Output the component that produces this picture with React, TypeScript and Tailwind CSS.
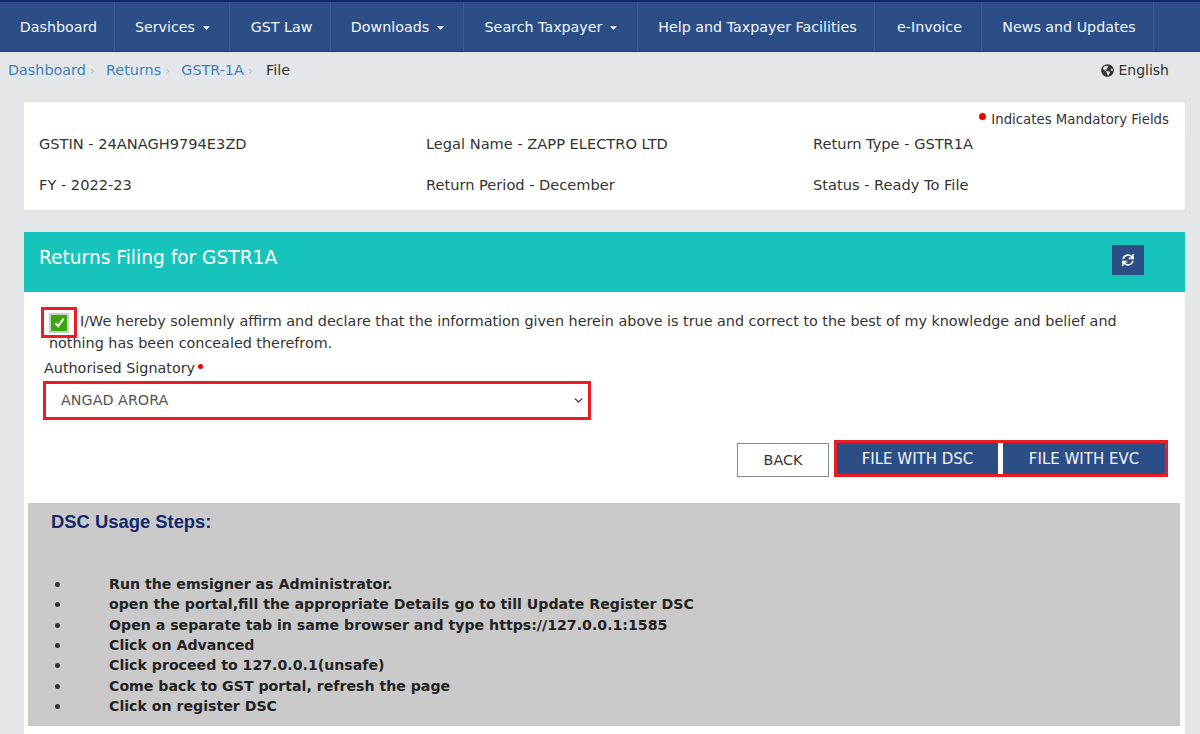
import React from "react";
import { FaCaretDown, FaGlobeAmericas, FaSync } from "react-icons/fa";
import { ChevronDown } from "lucide-react";

const navItems = [
  { label: "Dashboard", w: "w-[115px]" },
  { label: "Services", w: "w-[115px]", caret: true },
  { label: "GST Law", w: "w-[101px]" },
  { label: "Downloads", w: "w-[133px]", caret: true },
  { label: "Search Taxpayer", w: "w-[174px]", caret: true },
  { label: "Help and Taxpayer Facilities", w: "w-[237px]" },
  { label: "e-Invoice", w: "w-[107px]" },
  { label: "News and Updates", w: "w-[172px]" },
];

const steps = [
  "Run the emsigner as Administrator.",
  "open the portal,fill the appropriate Details go to till Update Register DSC",
  "Open a separate tab in same browser and type https://127.0.0.1:1585",
  "Click on Advanced",
  "Click proceed to 127.0.0.1(unsafe)",
  "Come back to GST portal, refresh the page",
  "Click on register DSC",
];

function Crumb({ text, className }: { text: string; className: string }) {
  return (
    <>
      <span className="text-[#3f7fb8]">{text}</span>
      <span className={`text-[#b9bfc6] text-[13px] ${className}`}>›</span>
    </>
  );
}

export default function App() {
  return (
    <div className="h-[734px] overflow-hidden bg-[#e4e7ea] font-['DejaVu_Sans',sans-serif] text-[14.35px] text-[#333333]">
      <nav className="flex h-[52px] border-t-2 border-b border-t-[#13286b] border-b-[#1c3d78] bg-[#2c4e86] text-[14.25px] text-[#f2f5f9]">
        {navItems.map((item) => (
          <div
            key={item.label}
            className={`${item.w} flex shrink-0 items-center justify-center border-r border-[#3a5b92] pt-[2px] pl-[3px] whitespace-nowrap`}
          >
            {item.label}
            {item.caret && <FaCaretDown className="ml-[6px] text-[11px]" />}
          </div>
        ))}
      </nav>

      <div className="flex h-[50px] items-center justify-between pr-[31px] pb-[12px] pl-2">
        <div className="flex items-center">
          <Crumb text="Dashboard" className="mr-[11px] ml-[4px]" />
          <Crumb text="Returns" className="mr-[11px] ml-[4px]" />
          <Crumb text="GSTR-1A" className="mr-[13px] ml-[4px]" />
          <span>File</span>
        </div>
        <div className="mt-[-2px] flex items-center gap-[4px] text-[14px]">
          <FaGlobeAmericas className="text-[13px]" />
          English
        </div>
      </div>

      <main className="mr-[15px] ml-6">
        <section className="h-[108px] bg-white px-[15px]">
          <div className="flex h-[30px] items-end justify-end pb-[2px] pr-[1px] text-[13.3px]">
            <span className="mr-[5px] mb-[10px] h-[7px] w-[7px] rounded-full bg-[#f00000]" />
            Indicates Mandatory Fields
          </div>
          <div className="mt-[2px] grid grid-cols-[387px_387px_1fr] gap-y-[21px] text-[14.6px] leading-5">
            <span>GSTIN - 24ANAGH9794E3ZD</span>
            <span>Legal Name - ZAPP ELECTRO LTD</span>
            <span>Return Type - GSTR1A</span>
            <span>FY - 2022-23</span>
            <span>Return Period - December</span>
            <span>Status - Ready To File</span>
          </div>
        </section>

        <section className="mt-[22px] h-[502px] bg-white">
          <div className="flex h-[60px] items-center justify-between bg-[#17c4bb] pr-[41px] pb-[8px] pl-[15px] text-[18.6px] text-white">
            Returns Filing for GSTR1A
            <button className="mt-[4px] flex h-[30px] w-[32px] items-center justify-center bg-[#2c4e86]">
              <FaSync className="text-[12px]" />
            </button>
          </div>

          <div className="pt-[18px] pr-[17px] pl-[20px]">
            <p className="w-[1100px] leading-[22px]">
              <span className="relative inline-block h-[22px] w-[36px] align-top">
                <span className="absolute top-[-3px] -left-[3px] flex h-[31px] w-[36px] items-center justify-center border-[3px] border-[#ed1c24]">
                  <span className="flex h-[20px] w-[20px] items-center justify-center border-2 border-[#c9cfca] bg-[#3aa60c] text-white">
                    <svg viewBox="0 0 12 12" className="h-[13px] w-[13px]" fill="none" stroke="currentColor" strokeWidth="1.8">
                      <path d="M2.2 6.5 4.8 9.4 9.8 2.4" />
                    </svg>
                  </span>
                </span>
              </span>
              I/We hereby solemnly affirm and declare that the information given herein above is true and correct to the best of my knowledge and belief and{" "}
              <span className="pl-[5px]">nothing has been concealed therefrom.</span>
            </p>

            <label className="mt-[5px] flex h-[20px] items-center">
              Authorised Signatory
              <span className="mb-[6px] ml-[3px] h-[5px] w-[5px] rounded-full bg-[#f00000]" />
            </label>
            <div className="mt-[2px] ml-[-1px] flex h-[39px] w-[548px] items-center justify-between border-[3px] border-[#ed1c24] pr-[3px] pl-[15px] text-[#555555]">
              ANGAD ARORA
              <ChevronDown className="h-[13px] w-[13px] text-[#333333]" strokeWidth={2.5} />
            </div>

            <div className="mt-[20px] flex items-start justify-end">
              <button className="mt-[3px] mr-[5px] h-[34px] w-[92px] border border-[#7c8ba0] bg-white pt-[1px]">BACK</button>
              <div className="flex h-[37px] w-[334px] border-[3px] border-[#ed1c24] bg-white text-[15px] text-[#f2f5f9]">
                <button className="h-[31px] w-[161px] bg-[#2c4e86] pt-[2px]">FILE WITH DSC</button>
                <button className="ml-[5px] h-[31px] flex-1 bg-[#2c4e86] pt-[2px]">FILE WITH EVC</button>
              </div>
            </div>
          </div>

          <div className="mt-[26px] mr-[5px] ml-1 h-[223px] bg-[#cacaca] pt-[9px] pl-[23px] text-[14.15px] font-bold text-[#222222]">
            <h3 className="font-['Liberation_Sans',sans-serif] text-[18.4px] leading-5 text-[#12286b]">DSC Usage Steps:</h3>
            <ul className="mt-[42.5px]">
              {steps.map((step) => (
                <li key={step} className="flex h-[20.33px] items-center">
                  <span className="ml-[4px] h-[5px] w-[5px] rounded-full bg-[#333333]" />
                  <span className="ml-[49px]">{step}</span>
                </li>
              ))}
            </ul>
          </div>
        </section>
      </main>
    </div>
  );
}
